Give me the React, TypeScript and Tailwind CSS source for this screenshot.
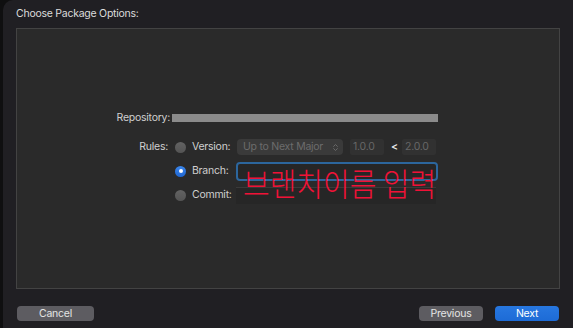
import { ChevronsUpDown } from "lucide-react";

const ui = { fontFamily: "Inter, 'Noto Sans', sans-serif" };

function Radio({ checked }: { checked?: boolean }) {
  if (checked) {
    return (
      <div className="w-[11px] h-[11px] rounded-full bg-gradient-to-b from-[#3a86ec] to-[#1f66d1] flex items-center justify-center">
        <div className="w-[4px] h-[4px] rounded-full bg-white" />
      </div>
    );
  }
  return <div className="w-[11px] h-[11px] rounded-full bg-gradient-to-b from-[#636363] to-[#545454]" />;
}

export default function App() {
  return (
    <div className="w-[573px] h-[328px] bg-[#0f0f10] pl-[3px] overflow-hidden tracking-[-0.25px]" style={ui}>
      <div className="h-full bg-[#201f23] rounded-tl-[10px] flex flex-col">
        <div className="h-[28px] pl-[13px] pt-[7px] text-[10.5px] leading-[14px] text-[#dcdcdc]">
          Choose Package Options:
        </div>

        {/* options panel */}
        <div className="relative ml-[13px] mr-[13px] h-[261px] bg-[#2a2a2a] border border-[#434343] pt-[81px] pl-[83px] text-[10.5px] text-[#cfcfcf] whitespace-nowrap">
          <div className="flex items-center h-[16px]">
            <div className="w-[70px] text-right">Repository:</div>
            <div className="ml-[2px] w-[266px] h-[8px] bg-[#8b8b8b]" />
          </div>

          <div className="mt-[9px] flex items-center h-[24px]">
            <div className="w-[68px] text-right">Rules:</div>
            <div className="ml-[7px]">
              <Radio />
            </div>
            <div className="ml-[6px] w-[44px]">Version:</div>
            <div className="ml-[1px] w-[106px] h-[16px] rounded-[4px] bg-[#3a3a3a] flex items-center pl-[6px] pr-[3px] text-[#6c6c6c]">
              <span className="flex-1">Up to Next Major</span>
              <ChevronsUpDown size={9} strokeWidth={2.5} className="text-[#6c6c6c]" />
            </div>
            <div className="ml-[7px] w-[34px] h-[16px] bg-[#313131] rounded-[2px] flex items-center pl-[3px] text-[#676767]">
              1.0.0
            </div>
            <div className="ml-[7px] w-[11px] text-[#e8e8e8] font-semibold">&lt;</div>
            <div className="w-[34px] h-[16px] bg-[#313131] rounded-[2px] flex items-center pl-[3px] text-[#676767]">
              2.0.0
            </div>
          </div>

          <div className="flex items-center h-[24px]">
            <div className="w-[75px]" />
            <Radio checked />
            <div className="ml-[6px] w-[44px]">Branch:</div>
            <div className="w-[202px] h-[19px] rounded-[4px] border-[2px] border-[#2c669d] bg-[#262626]" />
          </div>

          <div className="flex items-center h-[24px]">
            <div className="w-[75px]" />
            <Radio />
            <div className="ml-[6px] w-[44px]">Commit:</div>
            <div className="w-[200px] h-[17px] bg-[#262626] border-t border-[#3a3a3a]" />
          </div>

          {/* red annotation drawn over the branch field */}
          <div
            className="absolute left-[226px] top-[136px] text-[29px] leading-[30px] tracking-normal font-light text-[#f01237] whitespace-nowrap origin-top scale-y-[1.1]"
            style={{ fontFamily: "'Noto Sans CJK KR', sans-serif" }}
          >
            브랜치이름 입력
          </div>
        </div>

        <div className="mt-[17px] flex items-center px-[14px] text-[10.5px] text-[#e4e4e4]">
          <div className="w-[77px] h-[15px] rounded-[4px] bg-[#5d5c61] flex items-center justify-center">Cancel</div>
          <div className="flex-1" />
          <div className="w-[64px] h-[15px] rounded-[4px] bg-[#5d5c61] flex items-center justify-center">Previous</div>
          <div className="ml-[12px] w-[64px] h-[15px] rounded-[4px] bg-gradient-to-b from-[#2777e0] to-[#1d6bd6] flex items-center justify-center text-white">
            Next
          </div>
        </div>
      </div>
    </div>
  );
}
